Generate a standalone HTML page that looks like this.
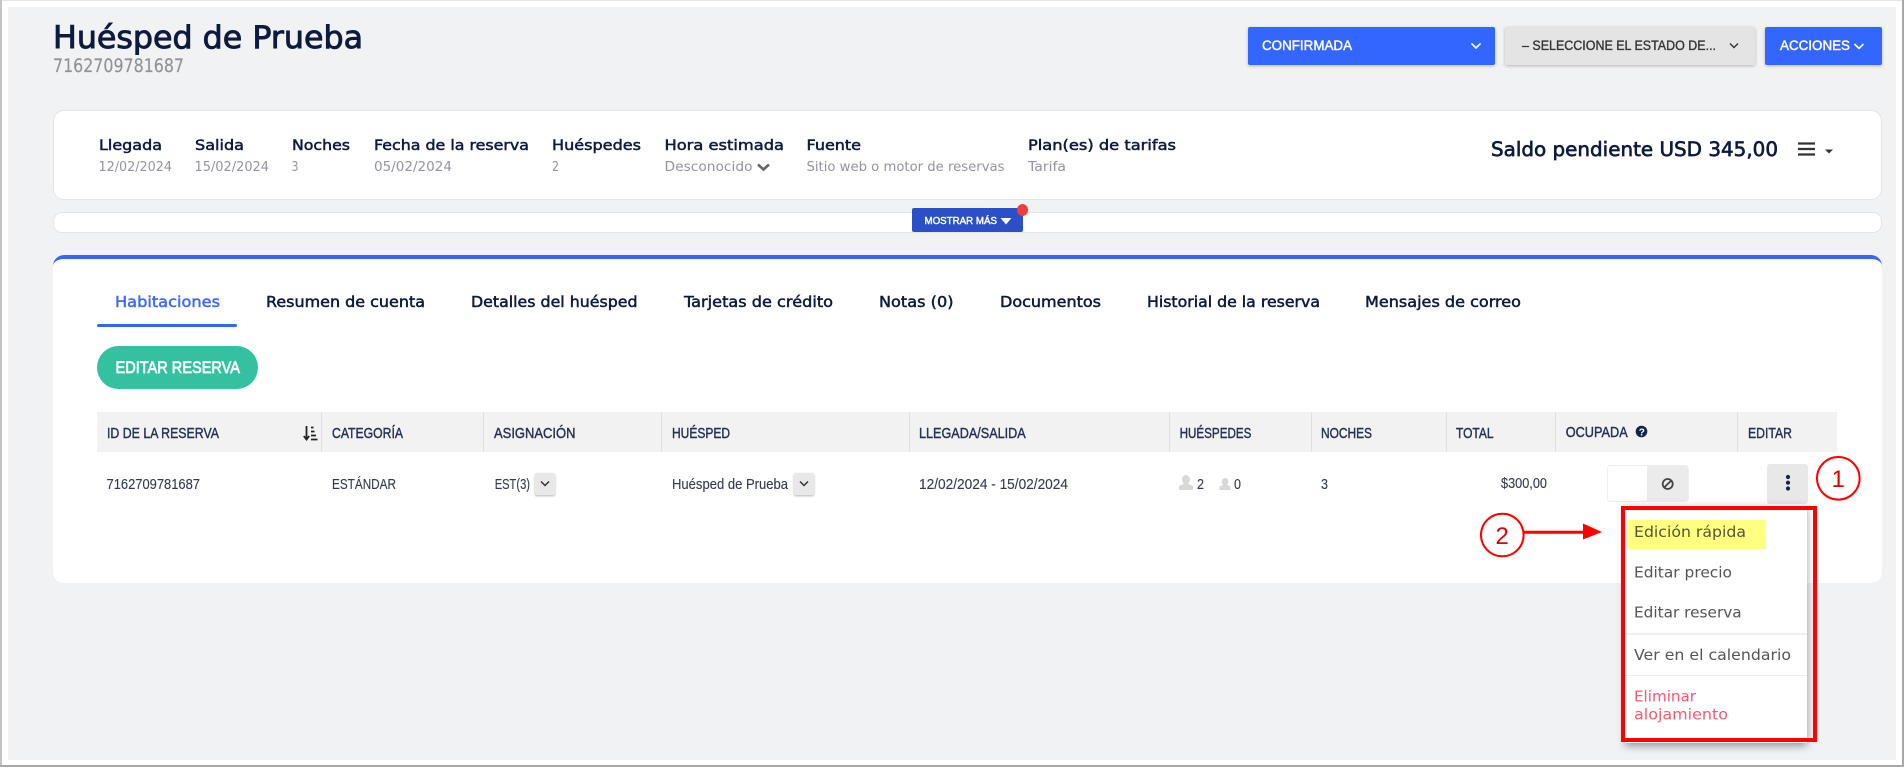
<!DOCTYPE html>
<html lang="es"><head><meta charset="utf-8"><title>Huésped de Prueba</title>
<style>
html,body{margin:0;padding:0;background:#fff}
#page{position:relative;width:1904px;height:769px;overflow:hidden;background:#fff}
#page div{position:absolute;box-sizing:border-box}
#frameL{left:0;top:0;width:2px;height:767px;background:#c4c4c4}
#frameT{left:0;top:0;width:1904px;height:1px;background:#e4e4e4}
#frameR{left:1902px;top:0;width:2px;height:767px;background:#a8a8a8}
#frameB{left:0;top:765px;width:1904px;height:2px;background:#a8a8a8}
#bg{left:8px;top:7px;width:1888px;height:753px;background:#f1f2f4}
.btn{border-radius:2px;box-shadow:0 1px 3px rgba(0,0,0,.25)}
.card{background:#fff;border:1px solid #e4e5e8;left:52.5px;width:1829.5px}
#c3{left:52.5px;top:255px;width:1829.5px;height:328px;background:#fff;border-top:4px solid #3366ff;border-radius:11px}
#th{left:97px;top:412px;width:1740px;height:40px;background:#f2f2f2}
.dv{top:412px;width:1px;height:40px;background:#dfdfdf}
.mini{width:20px;height:22px;top:473px;background:#e8e8e8;border-radius:2px;box-shadow:0 1px 2px rgba(0,0,0,.3)}
svg{position:absolute;left:0;top:0;filter:blur(.3px)}
text{white-space:pre}
.p{font-family:"DejaVu Sans",sans-serif;fill:#0d1b3e}
.pm{stroke:#0d1b3e;stroke-width:.5px}
.v{font-family:"DejaVu Sans",sans-serif;font-size:13px;fill:#94949f}
.o{font-family:"Liberation Sans",sans-serif;font-size:14.5px;fill:#353b4c;stroke:#353b4c;stroke-width:.12px}
.h{font-family:"Liberation Sans",sans-serif;font-size:14.5px;fill:#253152;stroke:#253152;stroke-width:.4px}
.w{font-family:"Liberation Sans",sans-serif;fill:#fff;stroke:#fff;stroke-width:.45px}
.m{font-family:"DejaVu Sans",sans-serif;font-size:15.5px;fill:#555}
</style></head><body>
<div id="page">
<div id="frameT"></div><div id="frameL"></div><div id="frameR"></div><div id="frameB"></div>
<div id="bg"></div>

<div class="btn" style="left:1248px;top:27px;width:247px;height:38px;background:#3366ff"></div>
<div class="btn" style="left:1505px;top:27px;width:250px;height:38px;background:#e4e4e4"></div>
<div class="btn" style="left:1765px;top:27px;width:117px;height:38px;background:#3366ff"></div>

<div class="card" style="top:110px;height:90px;border-radius:11px"></div>
<div class="card" style="top:212px;height:21px;border-radius:9px"></div>
<div style="left:912px;top:208px;width:111px;height:24px;background:#2a4fc6;border-radius:2px"></div>
<div style="left:1017px;top:204px;width:11px;height:12px;background:#ee3f3a;border-radius:50%"></div>

<div id="c3"></div>
<div style="left:97px;top:324px;width:140px;height:3px;background:#3366ff;border-radius:2px"></div>
<div style="left:97px;top:346px;width:161px;height:43px;background:#33c1a0;border-radius:22px"></div>

<div id="th"></div>
<div class="dv" style="left:321px"></div><div class="dv" style="left:483px"></div>
<div class="dv" style="left:661px"></div><div class="dv" style="left:909px"></div>
<div class="dv" style="left:1169px"></div><div class="dv" style="left:1311px"></div>
<div class="dv" style="left:1446px"></div><div class="dv" style="left:1555px"></div>
<div class="dv" style="left:1737px"></div>

<div class="mini" style="left:535px"></div>
<div class="mini" style="left:794px"></div>
<div style="left:1607px;top:465px;width:82px;height:37px;background:#ebebeb;border:1px solid #eee;border-radius:4px"></div>
<div style="left:1607px;top:465px;width:40px;height:37px;background:#fff;border:1px solid #eee;border-right:0;border-radius:4px 0 0 4px"></div>
<div style="left:1767px;top:464px;width:41px;height:40px;background:#e8e8e8;border-radius:3px"></div>

<div style="left:1625px;top:505px;width:182px;height:238px;background:#fff;box-shadow:0 3px 8px rgba(0,0,0,.38)"></div>
<div style="left:1625px;top:633px;width:182px;height:2px;background:#f0f0f3"></div>
<div style="left:1625px;top:675px;width:182px;height:1px;background:#efefef"></div>
<div style="left:1627px;top:520px;width:139px;height:29px;background:#ffff80"></div>
<div style="left:1621px;top:506px;width:196px;height:236px;border:4.5px solid #f00"></div>

<svg width="1904" height="769" viewBox="0 0 1904 769" xmlns="http://www.w3.org/2000/svg">
<text class="p" style="stroke:#0d1b3e;stroke-width:.9px" x="53" y="48" font-size="31.5" textLength="310" lengthAdjust="spacingAndGlyphs">Huésped de Prueba</text>
<text class="p" x="53" y="72" font-size="18.5" style="fill:#929292;stroke:#929292;stroke-width:.15px" textLength="131" lengthAdjust="spacingAndGlyphs">7162709781687</text>

<text class="w" x="1262" y="50" font-size="13.5" textLength="90" lengthAdjust="spacingAndGlyphs">CONFIRMADA</text>
<path d="M1471.5 43.5l4.5 4.5 4.5-4.5" fill="none" stroke="#fff" stroke-width="1.6"/>
<text x="1522" y="50" font-family="Liberation Sans" font-size="13.5" fill="#333" stroke="#333" stroke-width=".35" textLength="194" lengthAdjust="spacingAndGlyphs">– SELECCIONE EL ESTADO DE...</text>
<path d="M1730 43.5l4 4 4-4" fill="none" stroke="#333" stroke-width="1.4"/>
<text class="w" x="1780" y="50" font-size="13.5" textLength="70" lengthAdjust="spacingAndGlyphs">ACCIONES</text>
<path d="M1854.5 44l4.5 4.5 4.5-4.5" fill="none" stroke="#fff" stroke-width="1.6"/>

<g font-size="14.5">
<text class="p pm" x="99" y="150" textLength="63" lengthAdjust="spacingAndGlyphs">Llegada</text>
<text class="p pm" x="195" y="150" textLength="49" lengthAdjust="spacingAndGlyphs">Salida</text>
<text class="p pm" x="292" y="150" textLength="58" lengthAdjust="spacingAndGlyphs">Noches</text>
<text class="p pm" x="374" y="150" textLength="155" lengthAdjust="spacingAndGlyphs">Fecha de la reserva</text>
<text class="p pm" x="552" y="150" textLength="89" lengthAdjust="spacingAndGlyphs">Huéspedes</text>
<text class="p pm" x="664.5" y="150" textLength="119.5" lengthAdjust="spacingAndGlyphs">Hora estimada</text>
<text class="p pm" x="806.5" y="150" textLength="54.5" lengthAdjust="spacingAndGlyphs">Fuente</text>
<text class="p pm" x="1028" y="150" textLength="148" lengthAdjust="spacingAndGlyphs">Plan(es) de tarifas</text>
</g>
<text class="v" x="98.500" y="171" textLength="73.500" lengthAdjust="spacingAndGlyphs">12/02/2024</text>
<text class="v" x="194.500" y="171" textLength="74.500" lengthAdjust="spacingAndGlyphs">15/02/2024</text>
<text class="v" x="291.500" y="171" textLength="7" lengthAdjust="spacingAndGlyphs">3</text>
<text class="v" x="374" y="171" textLength="78" lengthAdjust="spacingAndGlyphs">05/02/2024</text>
<text class="v" x="552" y="171" textLength="7" lengthAdjust="spacingAndGlyphs">2</text>
<text class="v" x="664.5" y="171" textLength="88" lengthAdjust="spacingAndGlyphs">Desconocido</text>
<path d="M758 164.500l5.500 5 5.500-5" fill="none" stroke="#666" stroke-width="2.600"/>
<text class="v" x="806.5" y="171" textLength="198" lengthAdjust="spacingAndGlyphs">Sitio web o motor de reservas</text>
<text class="v" x="1028" y="171" textLength="38" lengthAdjust="spacingAndGlyphs">Tarifa</text>

<text class="p" style="stroke:#0d1b3e;stroke-width:.65px" x="1491" y="156" font-size="19.5" textLength="287" lengthAdjust="spacingAndGlyphs">Saldo pendiente USD 345,00</text>
<path d="M1798 143.5h17M1798 149h17M1798 154.500h17" stroke="#333" stroke-width="2.200"/>
<path d="M1825 149.500h8l-4 4z" fill="#333"/>

<text class="w" x="924.5" y="224" font-size="10" textLength="72.500" lengthAdjust="spacingAndGlyphs">MOSTRAR MÁS</text>
<path d="M1000.500 218h11l-5.500 6.500z" fill="#fff"/>

<g font-size="15.5">
<text class="p" style="fill:#3e68ff;stroke:#3e68ff;stroke-width:.5px" x="115" y="307" textLength="105" lengthAdjust="spacingAndGlyphs">Habitaciones</text>
<text class="p pm" x="266" y="307" textLength="159" lengthAdjust="spacingAndGlyphs">Resumen de cuenta</text>
<text class="p pm" x="471" y="307" textLength="166.500" lengthAdjust="spacingAndGlyphs">Detalles del huésped</text>
<text class="p pm" x="684" y="307" textLength="149" lengthAdjust="spacingAndGlyphs">Tarjetas de crédito</text>
<text class="p pm" x="879" y="307" textLength="74.500" lengthAdjust="spacingAndGlyphs">Notas (0)</text>
<text class="p pm" x="1000" y="307" textLength="101" lengthAdjust="spacingAndGlyphs">Documentos</text>
<text class="p pm" x="1147" y="307" textLength="173" lengthAdjust="spacingAndGlyphs">Historial de la reserva</text>
<text class="p pm" x="1365" y="307" textLength="156" lengthAdjust="spacingAndGlyphs">Mensajes de correo</text>
</g>

<text class="w" style="stroke-width:.7px" x="115.500" y="373" font-size="16.500" textLength="124.500" lengthAdjust="spacingAndGlyphs">EDITAR RESERVA</text>

<text class="h" x="107" y="438" textLength="112" lengthAdjust="spacingAndGlyphs">ID DE LA RESERVA</text>
<path d="M306.500 426v12.500M303.800 436l2.700 3.500 2.700-3.500" fill="none" stroke="#222" stroke-width="1.800"/>
<path d="M311 427.500h2.500M311 431.500h3.500M311 435.500h5M311 439.500h6.500" stroke="#222" stroke-width="1.800"/>
<text class="h" x="332" y="438" textLength="71" lengthAdjust="spacingAndGlyphs">CATEGORÍA</text>
<text class="h" x="494" y="438" textLength="81.500" lengthAdjust="spacingAndGlyphs">ASIGNACIÓN</text>
<text class="h" x="672" y="438" textLength="58" lengthAdjust="spacingAndGlyphs">HUÉSPED</text>
<text class="h" x="919" y="438" textLength="106.700" lengthAdjust="spacingAndGlyphs">LLEGADA/SALIDA</text>
<text class="h" x="1179.600" y="438" textLength="71.800" lengthAdjust="spacingAndGlyphs">HUÉSPEDES</text>
<text class="h" x="1321" y="438" textLength="51" lengthAdjust="spacingAndGlyphs">NOCHES</text>
<text class="h" x="1456" y="438" textLength="37.500" lengthAdjust="spacingAndGlyphs">TOTAL</text>
<text class="h" x="1565.700" y="437" textLength="62" lengthAdjust="spacingAndGlyphs">OCUPADA</text>
<circle cx="1641.500" cy="431.500" r="5.800" fill="#14244a"/>
<text x="1638.800" y="435.300" font-family="Liberation Sans" font-size="10" font-weight="bold" fill="#fff">?</text>
<text class="h" x="1748" y="438" textLength="44" lengthAdjust="spacingAndGlyphs">EDITAR</text>

<text class="o" x="106.500" y="489" textLength="93.500" lengthAdjust="spacingAndGlyphs">7162709781687</text>
<text class="o" x="332" y="489" textLength="64" lengthAdjust="spacingAndGlyphs">ESTÁNDAR</text>
<text class="o" x="494.700" y="489" textLength="35.300" lengthAdjust="spacingAndGlyphs">EST(3)</text>
<path d="M541 481.500l4 4 4-4" fill="none" stroke="#333" stroke-width="1.500"/>
<text class="o" x="672" y="489" textLength="116" lengthAdjust="spacingAndGlyphs">Huésped de Prueba</text>
<path d="M800 481.500l4 4 4-4" fill="none" stroke="#333" stroke-width="1.500"/>
<text class="o" x="919" y="489" textLength="149" lengthAdjust="spacingAndGlyphs">12/02/2024 - 15/02/2024</text>

<path d="M1186 475a4 4.500 0 0 1 4 4.500c0 2-1 3.300-2 4l5 2.500v4h-14v-4l5-2.500c-1-.7-2-2-2-4a4 4.500 0 0 1 4-4.500z" fill="#d8d8d8"/>
<text class="o" x="1197" y="489" textLength="7" lengthAdjust="spacingAndGlyphs">2</text>
<path d="M1225 478a3.300 3.600 0 0 1 3.300 3.600c0 1.600-.8 2.700-1.500 3.200l3.800 2v3.200h-11.200v-3.200l3.800-2c-.8-.6-1.500-1.600-1.500-3.200a3.300 3.600 0 0 1 3.300-3.600z" fill="#d8d8d8"/>
<text class="o" x="1234" y="489" textLength="7" lengthAdjust="spacingAndGlyphs">0</text>
<text class="o" x="1321" y="489" textLength="7" lengthAdjust="spacingAndGlyphs">3</text>
<text class="o" x="1501" y="488" textLength="46" lengthAdjust="spacingAndGlyphs">$300,00</text>

<circle cx="1667.700" cy="484" r="5" fill="none" stroke="#444" stroke-width="1.800"/>
<path d="M1671 480.700l-6.600 6.600" stroke="#444" stroke-width="1.800"/>
<circle cx="1788" cy="477" r="2.100" fill="#15244a"/><circle cx="1788" cy="482.700" r="2.100" fill="#15244a"/><circle cx="1788" cy="488.500" r="2.100" fill="#15244a"/>

<text class="m" style="fill:#55553a" x="1634" y="537" textLength="112" lengthAdjust="spacingAndGlyphs">Edición rápida</text>
<text class="m" x="1634" y="577.500" textLength="98" lengthAdjust="spacingAndGlyphs">Editar precio</text>
<text class="m" x="1634" y="617.500" textLength="107.700" lengthAdjust="spacingAndGlyphs">Editar reserva</text>
<text class="m" x="1634" y="660" textLength="157" lengthAdjust="spacingAndGlyphs">Ver en el calendario</text>
<text class="m" style="fill:#f4596f" x="1634" y="701.500" textLength="62" lengthAdjust="spacingAndGlyphs">Eliminar</text>
<text class="m" style="fill:#f4596f" x="1634" y="719.500" textLength="94" lengthAdjust="spacingAndGlyphs">alojamiento</text>

<circle cx="1838.300" cy="478.300" r="21.300" fill="#fff" fill-opacity="0" stroke="#f00" stroke-width="2"/>
<text x="1831.500" y="487" font-family="Liberation Sans" font-size="24" fill="#e00000">1</text>
<circle cx="1502.300" cy="535" r="21.300" fill="none" stroke="#f00" stroke-width="2"/>
<text x="1495.500" y="544" font-family="Liberation Sans" font-size="24" fill="#e00000">2</text>
<path d="M1523.500 532.300h60" stroke="#f00" stroke-width="3"/>
<path d="M1583 523.500l19 8.500-19 7.500z" fill="#f00"/>
</svg>
</div>
</body></html>
